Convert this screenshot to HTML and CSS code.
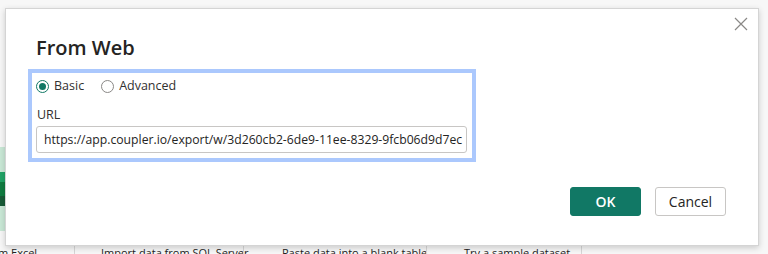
FILE: index.html
```html
<!DOCTYPE html>
<html>
<head>
<meta charset="utf-8">
<link rel="stylesheet" href="styles.css">
</head>
<body>
<div class="page">
  <div class="side-tile"><div class="tile-band"></div></div>
  <div class="links">
    <span class="link l1">m Excel</span>
    <span class="sep"></span>
    <span class="link l2">Import data from SQL Server</span>
    <span class="sep"></span>
    <span class="link l3">Paste data into a blank table</span>
    <span class="sep"></span>
    <span class="link l4">Try a sample dataset</span>
    <span class="sep"></span>
  </div>

  <div class="dialog">
    <button class="close" aria-label="Close">
      <svg width="14" height="14" viewBox="0 0 14 14"><path d="M1 1 L13 13 M13 1 L1 13" stroke="#8a8886" stroke-width="1.2" fill="none"/></svg>
    </button>
    <h1 class="title">From Web</h1>
    <div class="focus-box">
      <div class="radios">
        <label class="radio"><span class="dot checked"></span>Basic</label>
        <label class="radio"><span class="dot"></span>Advanced</label>
      </div>
      <div class="label">URL</div>
      <div class="input">https://app.coupler.io/export/w/3d260cb2-6de9-11ee-8329-9fcb06d9d7ec</div>
    </div>
    <div class="actions">
      <button class="btn primary">OK</button>
      <button class="btn secondary">Cancel</button>
    </div>
  </div>
</div>
</body>
</html>
```
FILE: styles.css
```css
* { box-sizing: border-box; }
html, body { margin: 0; padding: 0; }
body {
  width: 768px;
  height: 254px;
  overflow: hidden;
  background: #ffffff;
  font-family: "Open Sans", "Noto Sans", sans-serif;
  color: #252423;
}
.page {
  position: relative;
  width: 768px;
  height: 254px;
  background: #f7f7f7;
}
.side-tile {
  position: absolute;
  left: 0;
  top: 147px;
  width: 8px;
  height: 84px;
  background: #c9e8d6;
  display: flex;
  flex-direction: column;
  justify-content: center;
}
.tile-band {
  height: 34px;
  background: linear-gradient(#21a366 0 30%, #107c41 30% 70%, #185c37 70% 100%);
}
.links {
  position: absolute;
  left: 0;
  top: 246px;
  width: 768px;
  height: 8px;
  display: flex;
  align-items: flex-start;
  font-size: 11px;
  line-height: 14px;
  color: #252423;
  white-space: nowrap;
}
.link { display: block; }
.l1 { margin-left: -2px; width: 76px; }
.l2 { margin-left: 26px; width: 142px; }
.l3 { margin-left: 38px; width: 144px; }
.l4 { margin-left: 37px; width: 117px; }
.sep { width: 1px; height: 8px; background: #d6d6d6; }

.dialog {
  position: absolute;
  left: 5px;
  top: 8px;
  width: 754px;
  height: 238px;
  background: #ffffff;
  border: 1px solid #d4d4d4;
  box-shadow: 0 2px 6px rgba(0,0,0,0.18);
  padding: 26px 30px 0 22px;
  display: flex;
  flex-direction: column;
}
.close {
  position: absolute;
  right: 9px;
  top: 7px;
  width: 16px;
  height: 16px;
  padding: 0;
  border: 0;
  background: none;
  display: flex;
  align-items: center;
  justify-content: center;
}
.title {
  margin: 0 0 0 8px;
  font-size: 20px;
  line-height: 26px;
  font-weight: 600;
  color: #252423;
}
.focus-box {
  margin-top: 8px;
  width: 448px;
  border: 4px solid #abc8fd;
  padding: 5px 5px 5px 4px;
}
.radios {
  display: flex;
  gap: 17px;
  font-size: 12.5px;
  line-height: 16px;
  color: #323130;
}
.radio { display: flex; align-items: center; gap: 5px; }
.dot {
  width: 13px;
  height: 13px;
  border-radius: 50%;
  border: 1px solid #8a8886;
  background: #fff;
  position: relative;
}
.dot.checked { border-color: #117865; }
.dot.checked::after {
  content: "";
  position: absolute;
  left: 2px; top: 2px;
  width: 7px; height: 7px;
  border-radius: 50%;
  background: #117865;
}
.label {
  margin-top: 13px;
  font-size: 12.5px;
  line-height: 16px;
  color: #323130;
  padding-left: 1px;
}
.input {
  margin-top: 3px;
  height: 27px;
  border: 1px solid #c8c6c4;
  border-radius: 3px;
  padding: 0 0 0 7px;
  font-size: 12.2px;
  line-height: 25px;
  white-space: nowrap;
  overflow: hidden;
  color: #252423;
}
.actions {
  margin-top: 25px;
  display: flex;
  justify-content: flex-end;
  gap: 14px;
  padding-right: 2px;
}
.btn {
  width: 71px;
  height: 29px;
  border-radius: 3px;
  font-family: "Open Sans", "Noto Sans", sans-serif;
  font-size: 14px;
  cursor: pointer;
}
.primary {
  background: #117865;
  border: 1px solid #117865;
  color: #ffffff;
  font-weight: 600;
}
.secondary {
  background: #ffffff;
  border: 1px solid #c8c6c4;
  color: #252423;
}
```
